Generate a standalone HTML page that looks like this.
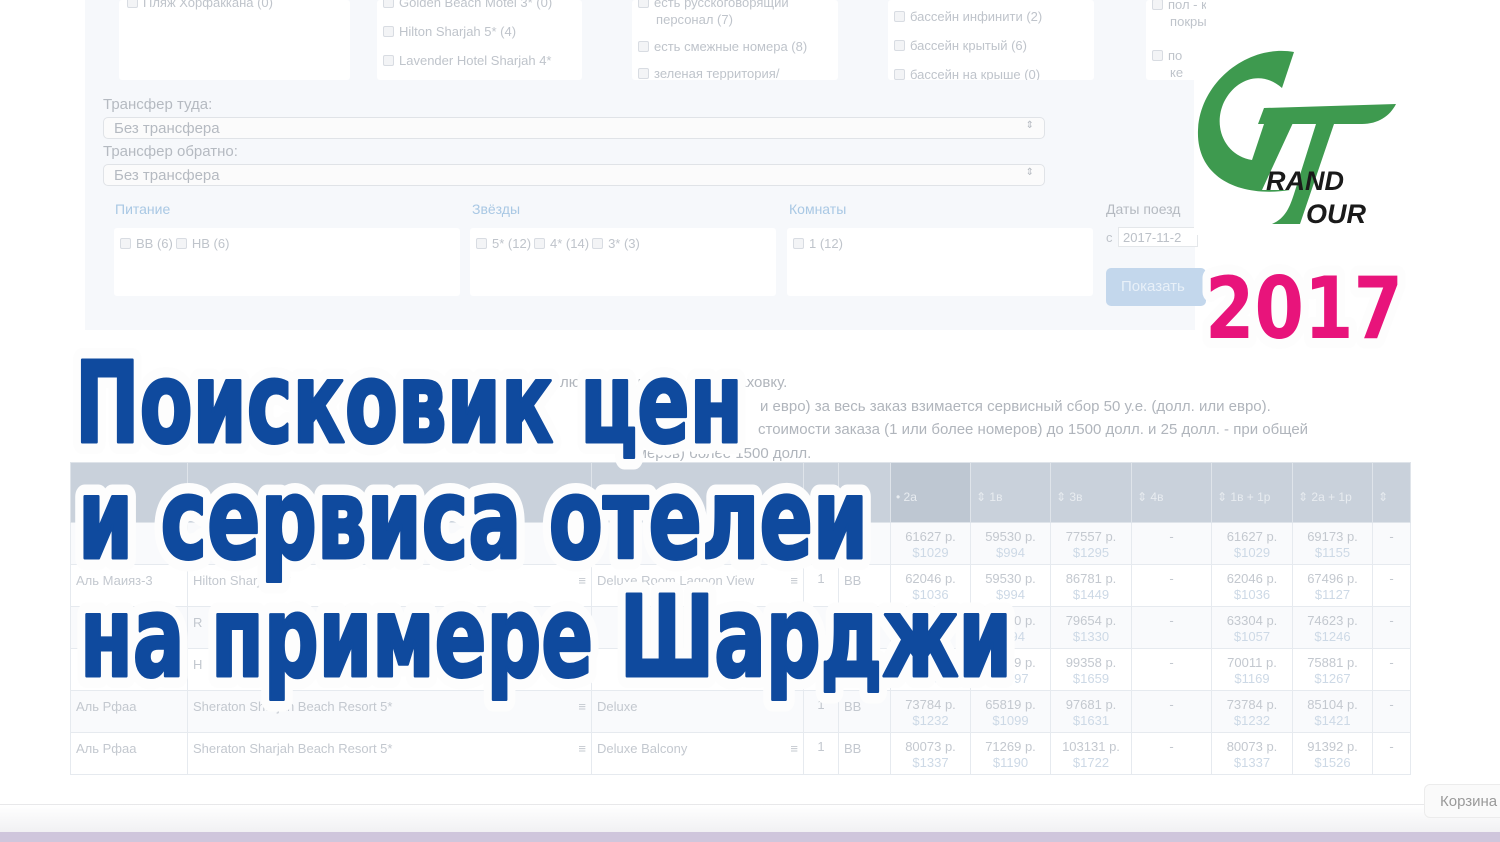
<!DOCTYPE html>
<html><head><meta charset="utf-8">
<style>
*{margin:0;padding:0;box-sizing:border-box}
body{width:1500px;height:842px;overflow:hidden;background:#fff;position:relative;font-family:"Liberation Sans","DejaVu Sans",sans-serif;color:#b9bec6}
.a{position:absolute}
.panel{left:85px;top:0;width:1110px;height:330px;background:#f6f8fb}
.box{background:#fff;border-radius:3px;overflow:hidden;white-space:nowrap}
.cb{display:inline-block;width:11px;height:11px;border:1px solid #d8dce2;border-radius:2px;background:#f3f4f6;vertical-align:-1px;margin-right:5px}
.sm{font-size:13px;color:#bfc4cb}
.sel{left:103px;width:942px;height:22px;border:1px solid #e0e3e7;border-radius:5px;background:#fbfbfb;font-size:15px;color:#b5bac1;padding:2px 10px}
.lbl{font-size:15px;color:#b5bac1}
.blue{font-size:14px;color:#a9c8e4}
table{border-collapse:collapse;table-layout:fixed;font-size:13px;color:#c3c8cf}
td{border:1px solid #e6eaef;height:42px;vertical-align:top;padding:8px 5px 0;white-space:nowrap;overflow:hidden}
td.n{text-align:center;line-height:16px;padding-top:6px}
td.n span{color:#cdd9e6;display:block}
tr.h td{height:60px;background:#c9d1db;border-color:#dfe4ea;color:#e8ecf0;vertical-align:middle;font-size:12px}
tr.h td.s{background:#bec7d2}
tr:nth-child(even) td{background:#f9fafc}
</style></head><body>
<div class="a panel"></div>
<div class="a box" style="left:119px;top:0;width:231px;height:80px"><div class="sm" style="padding:0 8px;margin-top:-5px"><span class="cb"></span>Пляж Хорфаккана (0)</div></div>
<div class="a box" style="left:377px;top:0;width:205px;height:80px"><div class="sm" style="padding:0 6px;line-height:29px;margin-top:-12px"><span class="cb"></span>Golden Beach Motel 3* (0)<br><span class="cb"></span>Hilton Sharjah 5* (4)<br><span class="cb"></span>Lavender Hotel Sharjah 4*</div></div>
<div class="a box" style="left:632px;top:0;width:206px;height:80px"><div class="sm" style="padding:0 6px;line-height:17px;margin-top:-6px"><span class="cb"></span>есть русскоговорящий<br>&nbsp;&nbsp;&nbsp;&nbsp;&nbsp;персонал (7)<div style="margin-top:10px"><span class="cb"></span>есть смежные номера (8)</div><div style="margin-top:10px"><span class="cb"></span>зеленая территория/</div></div></div>
<div class="a box" style="left:888px;top:0;width:206px;height:80px"><div class="sm" style="padding:2px 6px 0;line-height:29px"><span class="cb"></span>бассейн инфинити (2)<br><span class="cb"></span>бассейн крытый (6)<br><span class="cb"></span>бассейн на крыше (0)</div></div>
<div class="a box" style="left:1146px;top:0;width:60px;height:80px"><div class="sm" style="padding:0 6px;line-height:17px;margin-top:-4px"><span class="cb"></span>пол - ковровое<br>&nbsp;&nbsp;&nbsp;&nbsp;&nbsp;покрытие (8)<br><br><span class="cb"></span>по<br>&nbsp;&nbsp;&nbsp;&nbsp;&nbsp;ке</div></div>

<div class="a lbl" style="left:103px;top:96px">Трансфер туда:</div>
<div class="a sel" style="top:117px">Без трансфера<span style="float:right;font-size:10px">⇕</span></div>
<div class="a lbl" style="left:103px;top:143px">Трансфер обратно:</div>
<div class="a sel" style="top:164px">Без трансфера<span style="float:right;font-size:10px">⇕</span></div>
<div class="a blue" style="left:115px;top:201px">Питание</div>
<div class="a blue" style="left:472px;top:201px">Звёзды</div>
<div class="a blue" style="left:789px;top:201px">Комнаты</div>
<div class="a lbl" style="left:1106px;top:201px;font-size:14px">Даты поезд</div>
<div class="a box" style="left:114px;top:228px;width:346px;height:68px"><div class="sm" style="padding:8px 6px"><span class="cb"></span>BB (6)<span class="cb" style="margin-left:3px"></span>HB (6)</div></div>
<div class="a box" style="left:470px;top:228px;width:306px;height:68px"><div class="sm" style="padding:8px 6px"><span class="cb"></span>5* (12)<span class="cb" style="margin-left:3px"></span>4* (14)<span class="cb" style="margin-left:3px"></span>3* (3)</div></div>
<div class="a box" style="left:787px;top:228px;width:306px;height:68px"><div class="sm" style="padding:8px 6px"><span class="cb"></span>1 (12)</div></div>
<div class="a sm" style="left:1106px;top:230px">с</div>
<div class="a" style="left:1118px;top:227px;width:80px;height:20px;border:1px solid #e4e7ea;font-size:13px;color:#bcc1c8;padding:2px 4px;background:#fff">2017-11-2</div>
<div class="a" style="left:1106px;top:268px;width:100px;height:38px;background:#c3d7ec;border-radius:5px;color:#e8f0f8;font-size:15px;padding:10px 15px">Показать</div>

<div class="a sm" style="left:560px;top:371px;font-size:15px;line-height:23.5px;color:#b0b5bc;white-space:nowrap">лючают медицинскую страховку.<br><span style="margin-left:200px">и евро) за весь заказ взимается сервисный сбор 50 у.е. (долл. или евро).</span><br><span style="margin-left:198px">стоимости заказа (1 или более номеров) до 1500 долл. и 25 долл. - при общей</span><br><span style="margin-left:60px">номеров) более 1500 долл.</span></div>

<table class="a" style="left:70px;top:462px;width:1340px">
<colgroup><col style="width:117px"><col style="width:404px"><col style="width:212px"><col style="width:35px"><col style="width:52px"><col style="width:80px"><col style="width:80px"><col style="width:81px"><col style="width:80px"><col style="width:81px"><col style="width:80px"><col style="width:38px"></colgroup>
<tr class="h"><td></td><td></td><td></td><td></td><td>пит.</td><td class="s">• 2а</td><td>⇕ 1в</td><td>⇕ 3в</td><td>⇕ 4в</td><td>⇕ 1в + 1р</td><td>⇕ 2а + 1р</td><td>⇕</td></tr>
<tr><td></td><td></td><td></td><td></td><td></td><td class="n">61627 р.<span>$1029</span></td><td class="n">59530 р.<span>$994</span></td><td class="n">77557 р.<span>$1295</span></td><td class="n">-</td><td class="n">61627 р.<span>$1029</span></td><td class="n">69173 р.<span>$1155</span></td><td class="n">-</td></tr>
<tr><td>Аль Маияз-3</td><td>Hilton Sharjah 5*<span style="float:right">≡</span></td><td>Deluxe Room Lagoon View<span style="float:right">≡</span></td><td class="n">1</td><td>BB</td><td class="n">62046 р.<span>$1036</span></td><td class="n">59530 р.<span>$994</span></td><td class="n">86781 р.<span>$1449</span></td><td class="n">-</td><td class="n">62046 р.<span>$1036</span></td><td class="n">67496 р.<span>$1127</span></td><td class="n">-</td></tr>
<tr><td></td><td>R</td><td></td><td></td><td></td><td class="n">63304 р.<span>$1057</span></td><td class="n">59530 р.<span>$994</span></td><td class="n">79654 р.<span>$1330</span></td><td class="n">-</td><td class="n">63304 р.<span>$1057</span></td><td class="n">74623 р.<span>$1246</span></td><td class="n">-</td></tr>
<tr><td></td><td>H</td><td></td><td></td><td></td><td class="n">70011 р.<span>$1169</span></td><td class="n">65819 р.<span>$1097</span></td><td class="n">99358 р.<span>$1659</span></td><td class="n">-</td><td class="n">70011 р.<span>$1169</span></td><td class="n">75881 р.<span>$1267</span></td><td class="n">-</td></tr>
<tr><td>Аль Рфаа</td><td>Sheraton Sharjah Beach Resort 5*<span style="float:right">≡</span></td><td>Deluxe</td><td class="n">1</td><td>BB</td><td class="n">73784 р.<span>$1232</span></td><td class="n">65819 р.<span>$1099</span></td><td class="n">97681 р.<span>$1631</span></td><td class="n">-</td><td class="n">73784 р.<span>$1232</span></td><td class="n">85104 р.<span>$1421</span></td><td class="n">-</td></tr>
<tr><td>Аль Рфаа</td><td>Sheraton Sharjah Beach Resort 5*<span style="float:right">≡</span></td><td>Deluxe Balcony<span style="float:right">≡</span></td><td class="n">1</td><td>BB</td><td class="n">80073 р.<span>$1337</span></td><td class="n">71269 р.<span>$1190</span></td><td class="n">103131 р.<span>$1722</span></td><td class="n">-</td><td class="n">80073 р.<span>$1337</span></td><td class="n">91392 р.<span>$1526</span></td><td class="n">-</td></tr>
</table>

<div class="a" style="left:0;top:804px;width:1500px;height:28px;background:linear-gradient(#fff,#f1f1f3);border-top:1px solid #e8e8ea"></div>
<div class="a" style="left:0;top:832px;width:1500px;height:10px;background:#cfc6dc"></div>
<div class="a" style="left:1424px;top:784px;width:90px;height:34px;background:#fafafa;border:1px solid #ececec;border-radius:6px;font-size:15px;color:#9a9a9a;padding:8px 15px">Корзина</div>

<div class="a" style="left:1194px;top:45px;width:210px;height:190px;background:#fff"></div>
<svg class="a" style="left:0;top:0" width="1500" height="842">
<g fill="#3e9a4f">
<path d="M1294 52 L1282 88 C1262 70 1236 78 1224 102 C1212 128 1226 156 1252 160 L1268 112 L1298 112 L1262 190 L1290 190 C1240 198 1196 178 1198 130 C1200 82 1248 44 1294 52Z"/>
<path d="M1264 108 L1396 104 C1390 116 1378 124 1362 124 L1334 124 L1300 224 L1272 224 C1286 218 1290 206 1294 194 L1316 124 L1258 124Z"/>
</g>
<g font-family="'Liberation Sans',sans-serif" font-weight="bold" font-style="italic" fill="#1a1a1a">
<text x="1266" y="190" font-size="27">RAND</text>
<text x="1306" y="223" font-size="27">OUR</text>
</g>
<text x="1205" y="338" font-family="'DejaVu Sans',sans-serif" font-weight="bold" font-size="86" fill="#e8147b" stroke="#fdfdfd" stroke-width="20" paint-order="stroke" stroke-linejoin="round" textLength="198" lengthAdjust="spacingAndGlyphs">2017</text>
<g font-family="'DejaVu Sans Condensed','DejaVu Sans',sans-serif" font-weight="bold" font-size="112" fill="#0f4a9e" stroke="#fdfdfd" stroke-width="24" paint-order="stroke" stroke-linejoin="round">
<text x="75" y="442" textLength="668" lengthAdjust="spacingAndGlyphs">Поисковик цен</text>
<text x="78" y="558" textLength="790" lengthAdjust="spacingAndGlyphs">и сервиса отелеи</text>
<text x="80" y="676" textLength="932" lengthAdjust="spacingAndGlyphs">на примере Шарджи</text>
</g>
<g font-family="'DejaVu Sans Condensed','DejaVu Sans',sans-serif" font-weight="bold" font-size="112" fill="#0f4a9e" stroke="#0f4a9e" stroke-width="3" stroke-linejoin="round">
<text x="75" y="442" textLength="668" lengthAdjust="spacingAndGlyphs">Поисковик цен</text>
<text x="78" y="558" textLength="790" lengthAdjust="spacingAndGlyphs">и сервиса отелеи</text>
<text x="80" y="676" textLength="932" lengthAdjust="spacingAndGlyphs">на примере Шарджи</text>
</g>
</svg>
</body></html>
